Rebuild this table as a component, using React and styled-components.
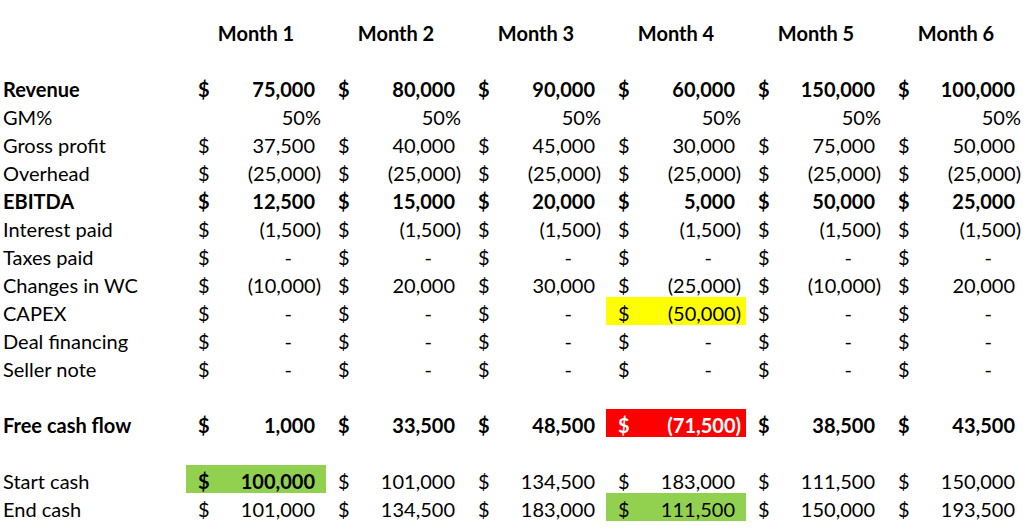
import styled, { createGlobalStyle } from "styled-components";

const GlobalStyle = createGlobalStyle`
  body {
    margin: 0;
    background: #ffffff;
    font-family: Lato, "Open Sans", sans-serif;
    color: #000000;
  }
`;

const Sheet = styled.div`
  display: grid;
  grid-template-columns: 186px repeat(6, 140px);
  grid-auto-rows: 28px;
  padding-top: 17px;
  font-size: 20px;
`;

const HeaderCell = styled.div`
  display: flex;
  align-items: center;
  justify-content: center;
  padding-top: 4px;
  font-weight: 700;
`;

const Label = styled.div`
  display: flex;
  align-items: center;
  padding: 4px 0 0 3px;
  font-weight: ${(p) => (p.$bold ? 700 : 400)};
  white-space: nowrap;
`;

const fills = {
  yellow: "#ffff00",
  red: "#ff0000",
  green: "#92d050",
};

const MoneyCell = styled.div`
  display: flex;
  align-items: center;
  justify-content: space-between;
  padding: 4px 5px 0 12px;
  background: ${(p) => (p.$fill ? fills[p.$fill] : "transparent")};
  color: ${(p) => (p.$fill === "red" ? "#ffffff" : "#000000")};
  font-weight: ${(p) => (p.$bold ? 700 : 400)};
  white-space: nowrap;
`;

const Amount = styled.span`
  padding-right: ${(p) => (p.$kind === "dash" ? "29px" : p.$kind === "pos" ? "6px" : "0")};
`;

const PercentCell = styled.div`
  display: flex;
  align-items: center;
  justify-content: flex-end;
  padding: 4px 5px 0 0;
`;

const Spacer = styled.div`
  grid-column: 1 / -1;
`;

const months = ["Month 1", "Month 2", "Month 3", "Month 4", "Month 5", "Month 6"];

const rows = [
  { label: "Revenue", bold: true, values: ["75,000", "80,000", "90,000", "60,000", "150,000", "100,000"] },
  { label: "GM%", percent: true, values: ["50%", "50%", "50%", "50%", "50%", "50%"] },
  { label: "Gross profit", values: ["37,500", "40,000", "45,000", "30,000", "75,000", "50,000"] },
  { label: "Overhead", values: ["(25,000)", "(25,000)", "(25,000)", "(25,000)", "(25,000)", "(25,000)"] },
  { label: "EBITDA", bold: true, values: ["12,500", "15,000", "20,000", "5,000", "50,000", "25,000"] },
  { label: "Interest paid", values: ["(1,500)", "(1,500)", "(1,500)", "(1,500)", "(1,500)", "(1,500)"] },
  { label: "Taxes paid", values: ["-", "-", "-", "-", "-", "-"] },
  { label: "Changes in WC", values: ["(10,000)", "20,000", "30,000", "(25,000)", "(10,000)", "20,000"] },
  { label: "CAPEX", values: ["-", "-", "-", "(50,000)", "-", "-"], fills: { 3: "yellow" } },
  { label: "Deal financing", values: ["-", "-", "-", "-", "-", "-"] },
  { label: "Seller note", values: ["-", "-", "-", "-", "-", "-"] },
  { spacer: true },
  { label: "Free cash flow", bold: true, values: ["1,000", "33,500", "48,500", "(71,500)", "38,500", "43,500"], fills: { 3: "red" } },
  { spacer: true },
  { label: "Start cash", values: ["100,000", "101,000", "134,500", "183,000", "111,500", "150,000"], fills: { 0: "green" }, boldCells: { 0: true } },
  { label: "End cash", values: ["101,000", "134,500", "183,000", "111,500", "150,000", "193,500"], fills: { 3: "green" } },
];

function kindOf(v) {
  if (v === "-") return "dash";
  if (v.startsWith("(")) return "neg";
  return "pos";
}

export default function App() {
  return (
    <>
      <GlobalStyle />
      <Sheet>
        <div />
        {months.map((m) => (
          <HeaderCell key={m}>{m}</HeaderCell>
        ))}
        <Spacer />
        {rows.map((row, i) => {
          if (row.spacer) return <Spacer key={i} />;
          return [
            <Label key={`l${i}`} $bold={row.bold}>
              {row.label}
            </Label>,
            ...row.values.map((v, j) =>
              row.percent ? (
                <PercentCell key={`${i}-${j}`}>{v}</PercentCell>
              ) : (
                <MoneyCell
                  key={`${i}-${j}`}
                  $fill={row.fills && row.fills[j]}
                  $bold={row.bold || (row.boldCells && row.boldCells[j])}
                >
                  <span>$</span>
                  <Amount $kind={kindOf(v)}>{v}</Amount>
                </MoneyCell>
              )
            ),
          ];
        })}
      </Sheet>
    </>
  );
}
